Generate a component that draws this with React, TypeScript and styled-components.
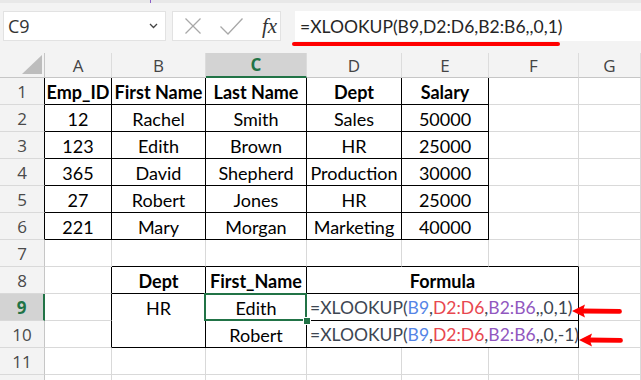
import React from 'react';
import styled, { createGlobalStyle } from 'styled-components';

const GRID = '#d9d9d9';
const HEAD_LINE = '#c6c6c6';
const BLACK = '#000';
const GREEN = '#217346';
const BLUE = '#5585e6';
const RED = '#e8474f';
const PURPLE = '#9158bf';

const GlobalStyle = createGlobalStyle`
  html, body {
    margin: 0;
    padding: 0;
    background: #fff;
  }
  body {
    font-family: Lato, "Open Sans", sans-serif;
  }
`;

const Page = styled.div`
  width: 641px;
  height: 380px;
  overflow: hidden;
  display: flex;
  flex-direction: column;
  background: #fff;

  & > * {
    flex-shrink: 0;
  }
`;

const TopStrip = styled.div`
  height: 3px;
  background: #e8e8e8;
  padding-left: 150px;
  display: flex;
`;

const Tick = styled.span`
  width: 1px;
  height: 3px;
  background: #8b5fc7;
`;

const FormulaBar = styled.div`
  position: relative;
  height: 50px;
  box-sizing: border-box;
  background: #f3f3f3;
  display: flex;
  align-items: flex-start;
  padding: 8px 0 0 3px;
  gap: 6px;
`;

const NameBox = styled.div`
  width: 163px;
  height: 30px;
  box-sizing: border-box;
  background: #fff;
  border: 1px solid #e2e2e2;
  display: flex;
  align-items: center;
  justify-content: space-between;
  padding: 0 7px 0 4px;
  font-family: "Open Sans", sans-serif;
  font-size: 18px;
  color: #333;
`;

const ButtonsBox = styled.div`
  width: 109px;
  height: 30px;
  box-sizing: border-box;
  background: #fff;
  border: 1px solid #e2e2e2;
  display: flex;
  align-items: center;
  padding-left: 12px;
  gap: 19px;
`;

const Fx = styled.span`
  font-family: "Liberation Serif", "DejaVu Serif", serif;
  font-style: italic;
  font-size: 21px;
  color: #333;
  line-height: 1;
`;

const FormulaInput = styled.div`
  flex: 1;
  height: 30px;
  margin-left: 8px;
  background: #fff;
  display: flex;
  align-items: center;
  padding-left: 5px;
  font-family: Lato, sans-serif;
  font-size: 17.5px;
  color: #262626;
  white-space: nowrap;
`;

const Underline = styled.div`
  position: absolute;
  left: 292px;
  top: 39px;
  width: 268px;
  height: 4px;
  border-radius: 2px;
  background: #ff0000;
`;

const Sheet = styled.div`
  display: grid;
  grid-template-columns: 45px 67px 94px 101px 95px 87px 90px 1fr;
  grid-template-rows: 25px repeat(12, 27px);
`;

const Corner = styled.div`
  grid-row: 1;
  grid-column: 1;
  box-sizing: border-box;
  background: #f3f3f3;
  border-right: 1px solid ${HEAD_LINE};
  border-bottom: 1px solid ${HEAD_LINE};
  display: flex;
  align-items: flex-end;
  justify-content: flex-end;
  padding: 0 2px 3px 0;
`;

const SelectAll = styled.div`
  width: 20px;
  height: 19px;
  background: #bdbdbd;
  clip-path: polygon(100% 0, 100% 100%, 0 100%);
`;

const ColHead = styled.div<{ $col: number; $active?: boolean }>`
  grid-row: 1;
  grid-column: ${(p) => p.$col};
  box-sizing: border-box;
  display: flex;
  align-items: center;
  justify-content: center;
  background: ${(p) => (p.$active ? '#d3d3d3' : '#f3f3f3')};
  border-right: 1px solid #dcdcdc;
  border-bottom: ${(p) => (p.$active ? `2px solid ${GREEN}` : `1px solid ${HEAD_LINE}`)};
  font-family: "Open Sans", sans-serif;
  font-size: 17px;
  font-weight: ${(p) => (p.$active ? 700 : 400)};
  color: ${(p) => (p.$active ? GREEN : '#444')};
`;

const RowHead = styled.div<{ $row: number; $active?: boolean; $edge: string }>`
  grid-row: ${(p) => p.$row + 1};
  grid-column: 1;
  box-sizing: border-box;
  display: flex;
  align-items: center;
  justify-content: center;
  background: ${(p) => (p.$active ? '#d3d3d3' : '#f3f3f3')};
  border-bottom: 1px solid ${GRID};
  border-right: ${(p) => (p.$active ? `2px solid ${GREEN}` : `1px solid ${p.$edge}`)};
  font-family: "Open Sans", sans-serif;
  font-size: 17px;
  font-weight: ${(p) => (p.$active ? 700 : 400)};
  color: ${(p) => (p.$active ? GREEN : '#4a4a4a')};
`;

const Cell = styled.div<{
  $row: number;
  $col: number;
  $colSpan: number;
  $rowSpan: number;
  $right: string;
  $bottom: string;
  $bold?: boolean;
  $left?: boolean;
  $top?: boolean;
  $selected?: boolean;
}>`
  position: relative;
  grid-row: ${(p) => `${p.$row + 1} / span ${p.$rowSpan}`};
  grid-column: ${(p) => `${p.$col + 1} / span ${p.$colSpan}`};
  box-sizing: border-box;
  display: flex;
  align-items: ${(p) => (p.$top ? 'flex-start' : 'flex-end')};
  justify-content: ${(p) => (p.$left ? 'flex-start' : 'center')};
  padding: ${(p) => (p.$top ? '3px 0 0' : '0 0 1px')};
  padding-left: ${(p) => (p.$left ? '3px' : '0')};
  border-right: 1px solid ${(p) => p.$right};
  border-bottom: 1px solid ${(p) => p.$bottom};
  font-family: Lato, "Open Sans", sans-serif;
  font-size: 18px;
  line-height: 22px;
  font-weight: ${(p) => (p.$bold ? 700 : 400)};
  color: #000;
  white-space: nowrap;

  ${(p) =>
    p.$selected &&
    `
    &::after {
      content: '';
      position: absolute;
      top: -1px;
      left: -2px;
      right: -1px;
      bottom: -1px;
      border: 2px solid ${GREEN};
      pointer-events: none;
    }
    &::before {
      content: '';
      position: absolute;
      right: -4px;
      bottom: -4px;
      width: 6px;
      height: 6px;
      background: ${GREEN};
      box-shadow: 0 0 0 1px #fff;
      z-index: 2;
    }
  `}
`;

const Part = styled.span<{ $color?: string }>`
  font-size: 17.5px;
  color: ${(p) => p.$color || '#3d4652'};
`;

const ArrowMark = styled.svg<{ $left: number; $top: number }>`
  position: absolute;
  left: ${(p) => p.$left}px;
  top: ${(p) => p.$top}px;
  overflow: visible;
`;

function Arrow({ left, top, length }: { left: number; top: number; length: number }) {
  return (
    <ArrowMark $left={left} $top={top} width={length} height={12} viewBox={`0 0 ${length} 12`}>
      <polygon points="0,6 13,-0.5 11.5,4 11.5,8 13,12.5" fill="#ff0000" />
      <line x1={10} y1={6} x2={length - 2.5} y2={6.4} stroke="#ff0000" strokeWidth={4.8} strokeLinecap="round" />
    </ArrowMark>
  );
}

function Formula({ last }: { last: string }) {
  return (
    <>
      <Part>=XLOOKUP(</Part>
      <Part $color={BLUE}>B9</Part>
      <Part>,</Part>
      <Part $color={RED}>D2:D6</Part>
      <Part>,</Part>
      <Part $color={PURPLE}>B2:B6</Part>
      <Part>{`,,0,${last})`}</Part>
    </>
  );
}

type CellDef = {
  r: number;
  c: number;
  text?: React.ReactNode;
  colSpan?: number;
  rowSpan?: number;
  bold?: boolean;
  left?: boolean;
  top?: boolean;
  selected?: boolean;
  arrow?: { left: number; top: number; length: number };
};

const table1 = [
  ['Emp_ID', 'First Name', 'Last Name', 'Dept', 'Salary'],
  ['12', 'Rachel', 'Smith', 'Sales', '50000'],
  ['123', 'Edith', 'Brown', 'HR', '25000'],
  ['365', 'David', 'Shepherd', 'Production', '30000'],
  ['27', 'Robert', 'Jones', 'HR', '25000'],
  ['221', 'Mary', 'Morgan', 'Marketing', '40000'],
];

const inTable = (r: number, c: number) =>
  (r >= 1 && r <= 6 && c >= 1 && c <= 5) || (r >= 8 && r <= 10 && c >= 2 && c <= 6);

function buildCells(): CellDef[] {
  const cells: CellDef[] = [];
  table1.forEach((row, i) => {
    for (let c = 1; c <= 7; c++) {
      cells.push({ r: i + 1, c, text: row[c - 1], bold: i === 0 });
    }
  });
  for (let c = 1; c <= 7; c++) cells.push({ r: 7, c });

  cells.push({ r: 8, c: 1 });
  cells.push({ r: 8, c: 2, text: 'Dept', bold: true });
  cells.push({ r: 8, c: 3, text: 'First_Name', bold: true });
  cells.push({ r: 8, c: 4, colSpan: 3, text: 'Formula', bold: true });
  cells.push({ r: 8, c: 7 });

  cells.push({ r: 9, c: 1 });
  cells.push({ r: 9, c: 2, rowSpan: 2, text: 'HR', top: true });
  cells.push({ r: 9, c: 3, text: 'Edith', selected: true });
  cells.push({
    r: 9,
    c: 4,
    colSpan: 3,
    left: true,
    text: <Formula last="1" />,
    arrow: { left: 265, top: 11, length: 50 },
  });
  cells.push({ r: 9, c: 7 });

  cells.push({ r: 10, c: 1 });
  cells.push({ r: 10, c: 3, text: 'Robert' });
  cells.push({
    r: 10,
    c: 4,
    colSpan: 3,
    left: true,
    text: <Formula last="-1" />,
    arrow: { left: 272, top: 13, length: 44 },
  });
  cells.push({ r: 10, c: 7 });

  for (let r = 11; r <= 12; r++) for (let c = 1; c <= 7; c++) cells.push({ r, c });
  return cells;
}

function edgeColors(d: CellDef) {
  const rEnd = d.r + (d.rowSpan || 1) - 1;
  const cEnd = d.c + (d.colSpan || 1) - 1;
  let right = GRID;
  let bottom = GRID;
  for (let r = d.r; r <= rEnd; r++) {
    if (inTable(r, cEnd) || inTable(r, cEnd + 1)) right = BLACK;
  }
  for (let c = d.c; c <= cEnd; c++) {
    if (inTable(rEnd, c) || inTable(rEnd + 1, c)) bottom = BLACK;
  }
  return { right, bottom };
}

const CELLS = buildCells();
const LETTERS = ['A', 'B', 'C', 'D', 'E', 'F', 'G'];

export default function App() {
  return (
    <Page>
      <GlobalStyle />
      <TopStrip>
        <Tick />
      </TopStrip>
      <FormulaBar>
        <NameBox>
          <span>C9</span>
          <svg width="9" height="6" viewBox="0 0 9 6">
            <polyline points="1,1 4.5,4.5 8,1" fill="none" stroke="#444" strokeWidth="1.3" />
          </svg>
        </NameBox>
        <ButtonsBox>
          <svg width="16" height="16" viewBox="0 0 16 16">
            <line x1="0.5" y1="0.5" x2="15.5" y2="15.5" stroke="#a8a8a8" strokeWidth="1.3" />
            <line x1="15.5" y1="0.5" x2="0.5" y2="15.5" stroke="#a8a8a8" strokeWidth="1.3" />
          </svg>
          <svg width="23" height="17" viewBox="0 0 23 17">
            <polyline points="0.5,8.5 8,16 22.5,0.5" fill="none" stroke="#a8a8a8" strokeWidth="1.3" />
          </svg>
          <Fx>fx</Fx>
        </ButtonsBox>
        <FormulaInput>=XLOOKUP(B9,D2:D6,B2:B6,,0,1)</FormulaInput>
        <Underline />
      </FormulaBar>
      <Sheet>
        <Corner>
          <SelectAll />
        </Corner>
        {LETTERS.map((l, i) => (
          <ColHead key={l} $col={i + 2} $active={l === 'C'}>
            {l}
          </ColHead>
        ))}
        {Array.from({ length: 12 }, (_, i) => i + 1).map((r) => (
          <RowHead key={r} $row={r} $active={r === 9} $edge={inTable(r, 1) ? BLACK : HEAD_LINE}>
            {r <= 11 ? r : null}
          </RowHead>
        ))}
        {CELLS.map((d) => {
          const { right, bottom } = edgeColors(d);
          return (
            <Cell
              key={`${d.r}-${d.c}`}
              $row={d.r}
              $col={d.c}
              $colSpan={d.colSpan || 1}
              $rowSpan={d.rowSpan || 1}
              $right={right}
              $bottom={bottom}
              $bold={d.bold}
              $left={d.left}
              $top={d.top}
              $selected={d.selected}
            >
              {d.text}
              {d.arrow && <Arrow {...d.arrow} />}
            </Cell>
          );
        })}
      </Sheet>
    </Page>
  );
}
